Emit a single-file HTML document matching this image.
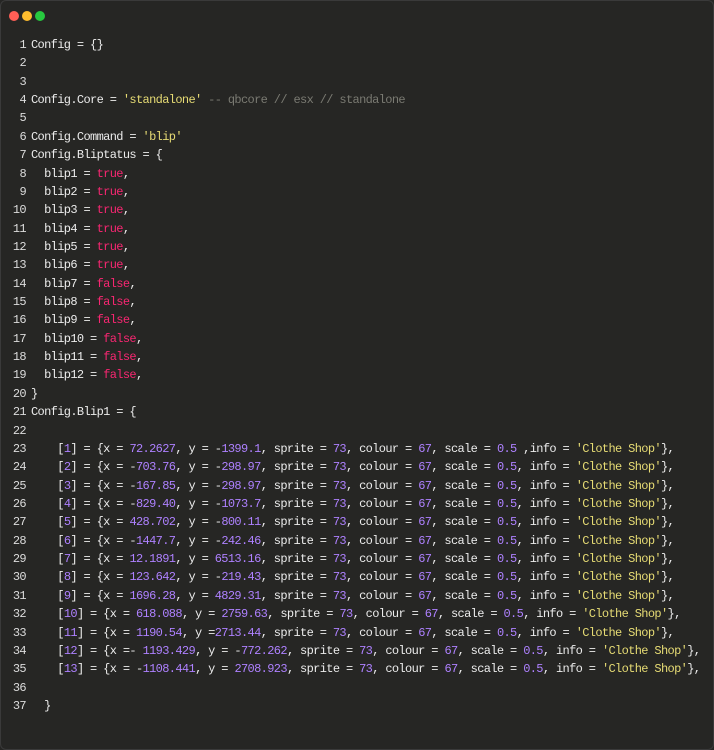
<!DOCTYPE html>
<html><head><meta charset="utf-8"><style>
html,body{margin:0;padding:0;background:#262624;width:714px;height:750px;overflow:hidden}
.win{position:absolute;left:0;top:0;width:712px;height:748px;border:1px solid #3a3a3a;border-radius:6px;background:#262624}
.d{position:absolute;top:10px;width:10px;height:10px;border-radius:50%}
pre{position:absolute;left:0;top:35px;margin:0;font-family:"Liberation Mono",monospace;font-size:12px;letter-spacing:-0.64px;line-height:18.36px;color:#ececec;white-space:pre}
.n{display:inline-block;width:25px;text-align:right;color:#dcdcdc;margin-right:5px}
.s{color:#e6db74}.m{color:#ae81ff}.b{color:#f92672}.c{color:#7a7a72}
</style></head><body><div class="win">
<div class="d" style="left:8px;background:#ff5f56"></div>
<div class="d" style="left:21px;background:#ffbd2e"></div>
<div class="d" style="left:34px;background:#27c93f"></div>
<pre><span class="n">1</span>Config = {}
<span class="n">2</span>
<span class="n">3</span>
<span class="n">4</span>Config.Core = <span class="s">'standalone'</span> <span class="c">-- qbcore // esx // standalone</span>
<span class="n">5</span>
<span class="n">6</span>Config.Command = <span class="s">'blip'</span>
<span class="n">7</span>Config.Bliptatus = {
<span class="n">8</span>  blip1 = <span class="b">true</span>,
<span class="n">9</span>  blip2 = <span class="b">true</span>,
<span class="n">10</span>  blip3 = <span class="b">true</span>,
<span class="n">11</span>  blip4 = <span class="b">true</span>,
<span class="n">12</span>  blip5 = <span class="b">true</span>,
<span class="n">13</span>  blip6 = <span class="b">true</span>,
<span class="n">14</span>  blip7 = <span class="b">false</span>,
<span class="n">15</span>  blip8 = <span class="b">false</span>,
<span class="n">16</span>  blip9 = <span class="b">false</span>,
<span class="n">17</span>  blip10 = <span class="b">false</span>,
<span class="n">18</span>  blip11 = <span class="b">false</span>,
<span class="n">19</span>  blip12 = <span class="b">false</span>,
<span class="n">20</span>}
<span class="n">21</span>Config.Blip1 = {
<span class="n">22</span>
<span class="n">23</span>    [<span class="m">1</span>] = {x = <span class="m">72.2627</span>, y = -<span class="m">1399.1</span>, sprite = <span class="m">73</span>, colour = <span class="m">67</span>, scale = <span class="m">0.5</span> ,info = <span class="s">'Clothe Shop'</span>},
<span class="n">24</span>    [<span class="m">2</span>] = {x = -<span class="m">703.76</span>, y = -<span class="m">298.97</span>, sprite = <span class="m">73</span>, colour = <span class="m">67</span>, scale = <span class="m">0.5</span>, info = <span class="s">'Clothe Shop'</span>},
<span class="n">25</span>    [<span class="m">3</span>] = {x = -<span class="m">167.85</span>, y = -<span class="m">298.97</span>, sprite = <span class="m">73</span>, colour = <span class="m">67</span>, scale = <span class="m">0.5</span>, info = <span class="s">'Clothe Shop'</span>},
<span class="n">26</span>    [<span class="m">4</span>] = {x = -<span class="m">829.40</span>, y = -<span class="m">1073.7</span>, sprite = <span class="m">73</span>, colour = <span class="m">67</span>, scale = <span class="m">0.5</span>, info = <span class="s">'Clothe Shop'</span>},
<span class="n">27</span>    [<span class="m">5</span>] = {x = <span class="m">428.702</span>, y = -<span class="m">800.11</span>, sprite = <span class="m">73</span>, colour = <span class="m">67</span>, scale = <span class="m">0.5</span>, info = <span class="s">'Clothe Shop'</span>},
<span class="n">28</span>    [<span class="m">6</span>] = {x = -<span class="m">1447.7</span>, y = -<span class="m">242.46</span>, sprite = <span class="m">73</span>, colour = <span class="m">67</span>, scale = <span class="m">0.5</span>, info = <span class="s">'Clothe Shop'</span>},
<span class="n">29</span>    [<span class="m">7</span>] = {x = <span class="m">12.1891</span>, y = <span class="m">6513.16</span>, sprite = <span class="m">73</span>, colour = <span class="m">67</span>, scale = <span class="m">0.5</span>, info = <span class="s">'Clothe Shop'</span>},
<span class="n">30</span>    [<span class="m">8</span>] = {x = <span class="m">123.642</span>, y = -<span class="m">219.43</span>, sprite = <span class="m">73</span>, colour = <span class="m">67</span>, scale = <span class="m">0.5</span>, info = <span class="s">'Clothe Shop'</span>},
<span class="n">31</span>    [<span class="m">9</span>] = {x = <span class="m">1696.28</span>, y = <span class="m">4829.31</span>, sprite = <span class="m">73</span>, colour = <span class="m">67</span>, scale = <span class="m">0.5</span>, info = <span class="s">'Clothe Shop'</span>},
<span class="n">32</span>    [<span class="m">10</span>] = {x = <span class="m">618.088</span>, y = <span class="m">2759.63</span>, sprite = <span class="m">73</span>, colour = <span class="m">67</span>, scale = <span class="m">0.5</span>, info = <span class="s">'Clothe Shop'</span>},
<span class="n">33</span>    [<span class="m">11</span>] = {x = <span class="m">1190.54</span>, y =<span class="m">2713.44</span>, sprite = <span class="m">73</span>, colour = <span class="m">67</span>, scale = <span class="m">0.5</span>, info = <span class="s">'Clothe Shop'</span>},
<span class="n">34</span>    [<span class="m">12</span>] = {x =- <span class="m">1193.429</span>, y = -<span class="m">772.262</span>, sprite = <span class="m">73</span>, colour = <span class="m">67</span>, scale = <span class="m">0.5</span>, info = <span class="s">'Clothe Shop'</span>},
<span class="n">35</span>    [<span class="m">13</span>] = {x = -<span class="m">1108.441</span>, y = <span class="m">2708.923</span>, sprite = <span class="m">73</span>, colour = <span class="m">67</span>, scale = <span class="m">0.5</span>, info = <span class="s">'Clothe Shop'</span>},
<span class="n">36</span>
<span class="n">37</span>  }</pre>
</div></body></html>
